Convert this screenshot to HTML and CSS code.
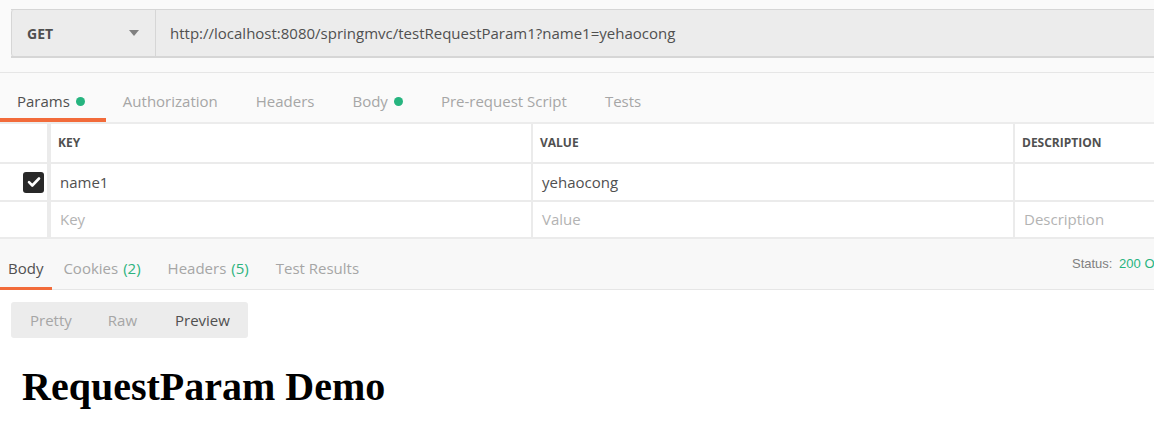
FILE: index.html
```html
<!DOCTYPE html>
<html lang="en">
<head>
    <meta charset="UTF-8">
    <title>Postman - testRequestParam1</title>
    <link rel="stylesheet" href="styles.css">
</head>
<body>

<div class="request">
    <div class="url-bar">
        <div class="method">
            <span>GET</span>
            <span class="caret"></span>
        </div>
        <div class="url">http://localhost:8080/springmvc/testRequestParam1?name1=yehaocong</div>
    </div>
</div>

<div class="req-tabs">
    <div class="tab active">Params <span class="dot"></span></div>
    <div class="tab">Authorization</div>
    <div class="tab">Headers</div>
    <div class="tab">Body <span class="dot"></span></div>
    <div class="tab">Pre-request Script</div>
    <div class="tab">Tests</div>
</div>

<div class="params">
    <div class="row head">
        <div class="cell check"></div>
        <div class="cell">KEY</div>
        <div class="cell">VALUE</div>
        <div class="cell">DESCRIPTION</div>
    </div>
    <div class="row">
        <div class="cell check">
            <span class="box">
                <svg width="14" height="12" viewBox="0 0 14 12"><path d="M2 6.2l3.3 3.3L12 2.5" fill="none" stroke="#fff" stroke-width="2.6" stroke-linecap="round" stroke-linejoin="round"/></svg>
            </span>
        </div>
        <div class="cell input">name1</div>
        <div class="cell input">yehaocong</div>
        <div class="cell input"></div>
    </div>
    <div class="row">
        <div class="cell check"></div>
        <div class="cell input placeholder">Key</div>
        <div class="cell input placeholder">Value</div>
        <div class="cell input placeholder">Description</div>
    </div>
</div>

<div class="res-tabs">
    <div class="tab active">Body</div>
    <div class="tab">Cookies <span class="count">(2)</span></div>
    <div class="tab">Headers <span class="count">(5)</span></div>
    <div class="tab">Test Results</div>
    <div class="status">Status: <span class="ok">200 OK</span></div>
</div>

<div class="response">
    <div class="views">
        <span>Pretty</span>
        <span>Raw</span>
        <span class="current">Preview</span>
    </div>
    <h1 class="preview">RequestParam Demo</h1>
</div>

</body>
</html>
```

FILE: styles.css
```css
body {
    margin: 0;
    font-family: 'Open Sans', sans-serif;
    font-size: 15px;
    color: #505050;
    background: #fff;
    width: 1154px;
    overflow: hidden;
}

.request {
    background: #fafafa;
    padding: 9px 0 14px 11px;
    border-bottom: 1px solid #e6e6e6;
}

.url-bar {
    display: flex;
    height: 46px;
    background: #ececec;
    border-top: 1px solid #d6d6d6;
    border-bottom: 2px solid #d6d6d6;
}

.method {
    width: 145px;
    flex-shrink: 0;
    display: flex;
    align-items: center;
    justify-content: space-between;
    padding: 0 16px 0 15px;
    box-sizing: border-box;
    border-left: 1px solid #d6d6d6;
    border-right: 1px solid #d6d6d6;
    border-radius: 3px 0 0 3px;
    font-weight: 700;
    font-size: 14px;
}

.caret {
    width: 0;
    height: 0;
    border-left: 5px solid transparent;
    border-right: 5px solid transparent;
    border-top: 6px solid #808080;
}

.url {
    display: flex;
    align-items: center;
    padding-left: 14px;
    white-space: nowrap;
}

.req-tabs {
    display: flex;
    height: 51px;
    background: #fafafa;
    border-bottom: 2px solid #ececec;
    box-sizing: border-box;
    align-items: flex-end;
}

.tab {
    color: #a6a6a6;
    padding: 0 21px 7px 17px;
    border-bottom: 4px solid transparent;
    white-space: nowrap;
    display: flex;
    align-items: center;
    gap: 5px;
}

.tab.active {
    color: #505050;
    border-bottom-color: #f26b3a;
}

.dot {
    width: 9px;
    height: 9px;
    border-radius: 50%;
    background: #26b47f;
    margin-left: 1px;
}

.params {
    background: #fff;
}

.row {
    display: grid;
    grid-template-columns: 49px 482px 482px 1fr;
    height: 38px;
    border-bottom: 2px solid #ebebeb;
}

.row:not(.head) {
    height: 36px;
}

.row:last-child {
    height: 35px;
}

.cell {
    display: flex;
    align-items: center;
    border-left: 2px solid #ebebeb;
    padding-left: 7px;
    padding-bottom: 1px;
    white-space: nowrap;
    overflow: hidden;
}

.cell.check {
    border-left: none;
    justify-content: flex-end;
    padding: 0 3px 0 0;
    border-right: 2px solid #ebebeb;
}

.head .cell {
    font-size: 12px;
    font-weight: 700;
    color: #505050;
}

.cell.input {
    padding-left: 9px;
}

.cell.placeholder {
    color: #b3b3b3;
}

.box {
    width: 21px;
    height: 21px;
    background: #282828;
    border-radius: 3px;
    display: flex;
    align-items: center;
    justify-content: center;
}

.res-tabs {
    display: flex;
    align-items: flex-end;
    height: 51px;
    background: #f8f8f8;
    border-bottom: 1px solid #e6e6e6;
    box-sizing: border-box;
}

.res-tabs .tab {
    padding: 0 9px 9px 8px;
    border-bottom-width: 3px;
    gap: 5px;
    margin-bottom: -1px;
}

.res-tabs .tab + .tab {
    padding-left: 11px;
    margin-right: 7px;
}

.count {
    color: #2db37e;
}

.status {
    margin-left: auto;
    align-self: center;
    margin-top: -2px;
    font-family: 'Liberation Sans', Arial, sans-serif;
    font-size: 13px;
    color: #808080;
    white-space: nowrap;
    width: 82px;
    overflow: hidden;
}

.ok {
    color: #26b47f;
    margin-left: 3px;
}

.response {
    padding: 12px 11px 0;
}

.views {
    display: inline-flex;
    background: #ececec;
    border-radius: 3px;
    height: 36px;
    align-items: center;
    width: 237px;
    box-sizing: border-box;
    padding-left: 19px;
}

.views span {
    color: #a6a6a6;
    margin-right: 36px;
}

.views span + span {
    margin-right: 38px;
}

.views span.current {
    color: #505050;
    margin-right: 0;
}

.preview {
    font-family: 'Liberation Serif', 'Times New Roman', serif;
    font-weight: 700;
    font-size: 40px;
    color: #000;
    margin: 25px 0 0 11px;
}
```
